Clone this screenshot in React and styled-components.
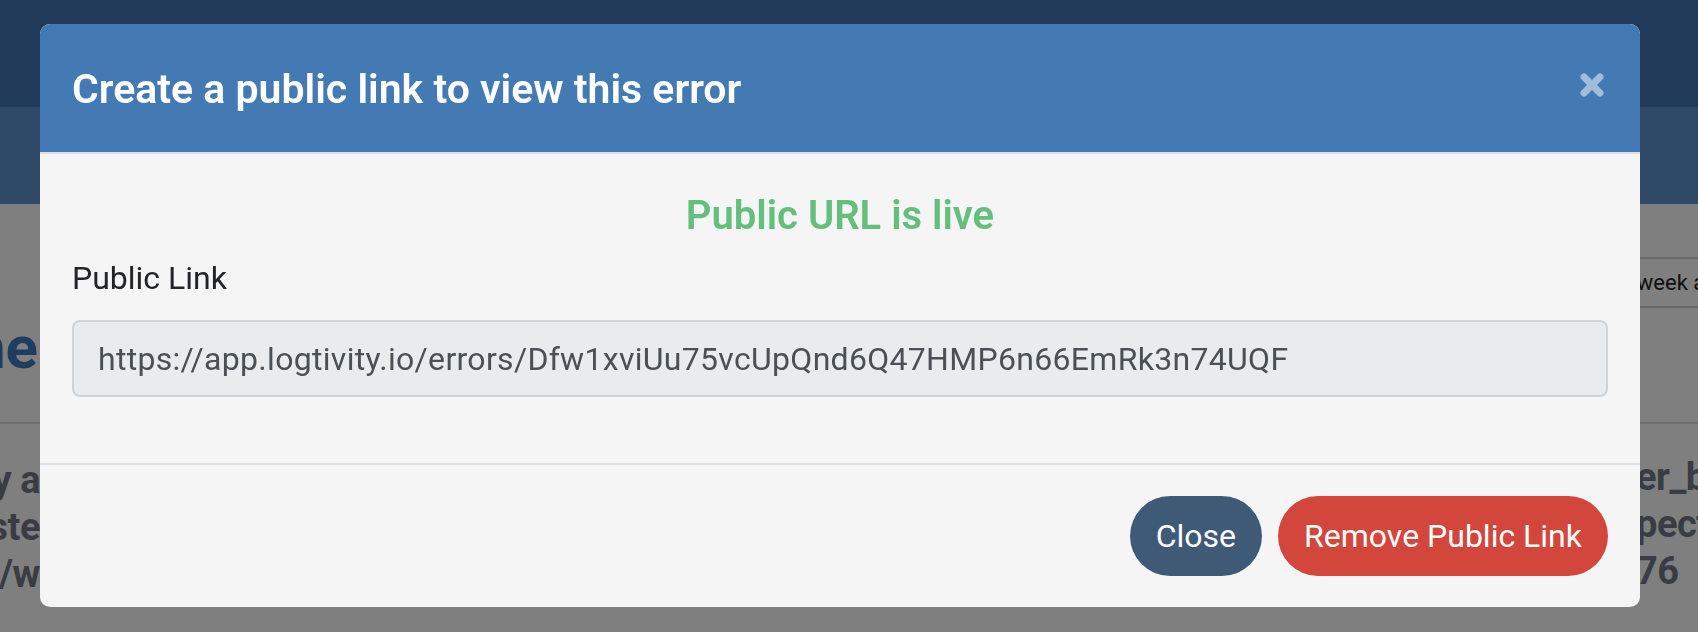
import React from 'react'
import styled, { createGlobalStyle } from 'styled-components'

const GlobalStyle = createGlobalStyle`
  html, body {
    margin: 0;
    padding: 0;
    height: 100%;
    overflow: hidden;
  }
  body {
    font-family: Roboto, "Liberation Sans", sans-serif;
    background: #fff;
  }
  * {
    box-sizing: border-box;
  }
`;

/* ---- page behind the modal ---- */

const Page = styled.div`
  height: 100vh;
  background: #fff;
  overflow: hidden;
`;

const Navbar = styled.div`
  height: 107px;
  background: #4476b4;
`;

const SubBar = styled.div`
  height: 97px;
  background: #5e94ce;
`;

const TitleRow = styled.div`
  display: grid;
  grid-template-columns: 38px 1fr 95px;
  height: 220px;
  border-bottom: 2px solid #dcdcdc;
`;

const Clip = styled.div`
  display: flex;
  justify-content: ${({ $end }) => ($end ? 'flex-end' : 'flex-start')};
  align-items: flex-start;
  overflow: hidden;
  white-space: nowrap;
  padding-top: ${({ $top }) => $top}px;
`;

const PageTitle = styled.h1`
  margin: 0;
  font-size: 60px;
  line-height: 64px;
  font-weight: 700;
  color: #3c7abe;
`;

const TimeBadge = styled.span`
  display: inline-flex;
  align-items: center;
  height: 51px;
  padding: 0 14px;
  border: 2px solid #d0d0d0;
  border-radius: 6px;
  font-size: 22px;
  color: #222;
`;

const TextRow = styled.div`
  display: grid;
  grid-template-columns: 40px 1fr 62px;
`;

const Lines = styled.div`
  display: flex;
  flex-direction: column;
  align-items: ${({ $end }) => ($end ? 'flex-end' : 'flex-start')};
  overflow: hidden;
  white-space: nowrap;
  padding-top: ${({ $top }) => $top}px;
`;

const Line = styled.span`
  font-size: 38px;
  line-height: 47px;
  font-weight: 700;
  letter-spacing: -0.5px;
  color: #737b86;
`;

/* ---- modal ---- */

const Backdrop = styled.div`
  position: fixed;
  inset: 0;
  background: rgba(0, 0, 0, 0.5);
  overflow: hidden;
`;

const Modal = styled.div`
  width: 1600px;
  margin: 24px 0 0 40px;
  background: #f5f5f5;
  border-radius: 10px;
  overflow: hidden;
`;

const Header = styled.div`
  display: flex;
  align-items: center;
  justify-content: space-between;
  padding: 35px 35px 33px 32px;
  background: #437ab4;
  border-bottom: 2px solid #dee2e6;
`;

const Title = styled.h5`
  margin: 0;
  font-size: 41px;
  line-height: 60px;
  font-weight: 600;
  color: #fff;
`;

const CloseX = styled.button`
  display: flex;
  width: 26px;
  height: 26px;
  margin-top: -8px;
  padding: 0;
  border: 0;
  background: none;
  color: rgba(255, 255, 255, 0.5);
  cursor: pointer;
`;

const Body = styled.div`
  padding: 32px 32px 32px;
`;

const Status = styled.h5`
  margin: 0 0 8px;
  text-align: center;
  font-size: 40px;
  line-height: 60px;
  font-weight: 600;
  color: #64bf7c;
`;

const FormGroup = styled.div`
  margin-bottom: 34px;
`;

const Label = styled.label`
  display: block;
  margin-bottom: 18px;
  font-size: 32px;
  line-height: 48px;
  color: #212529;
`;

const Input = styled.input`
  display: block;
  width: 100%;
  height: 77px;
  padding: 0 24px;
  background: #e9ecef;
  border: 2px solid #ced4da;
  border-radius: 8px;
  font-family: inherit;
  font-size: 32px;
  letter-spacing: 0.3px;
  color: #495057;
  outline: none;
`;

const Footer = styled.div`
  display: flex;
  justify-content: flex-end;
  gap: 16px;
  padding: 31px 32px;
  border-top: 2px solid #dee2e6;
`;

const Button = styled.button`
  height: 80px;
  padding: 0 26px;
  border: 0;
  border-radius: 40px;
  background: ${({ $tone }) => ($tone === 'danger' ? '#d3463c' : '#3e5a77')};
  font-family: inherit;
  font-size: 32px;
  color: #fff;
  cursor: pointer;
`;

const publicUrl = 'https://app.logtivity.io/errors/Dfw1xviUu75vcUpQnd6Q47HMP6n66EmRk3n74UQF'

const App = () => {
  return (
    <>
      <GlobalStyle />
      <Page>
        <Navbar />
        <SubBar />
        <TitleRow>
          <Clip $end $top={112}>
            <PageTitle>Error Timeline</PageTitle>
          </Clip>
          <div />
          <Clip $top={53}>
            <TimeBadge>1 week ago</TimeBadge>
          </Clip>
        </TitleRow>
        <TextRow>
          <Lines $end $top={33}>
            <Line>Uncaught TypeError in your theme by a</Line>
            <Line>Undefined index in the filesystem ste</Line>
            <Line>/var/w</Line>
          </Lines>
          <div />
          <Lines $top={30}>
            <Line>er_backtrace</Line>
            <Line>pected</Line>
            <Line>76</Line>
          </Lines>
        </TextRow>
      </Page>
      <Backdrop>
        <Modal>
          <Header>
            <Title>Create a public link to view this error</Title>
            <CloseX aria-label="Close">
              <svg width="26" height="26" viewBox="0 0 26 26">
                <path d="M5 5 L21 21 M21 5 L5 21" stroke="currentColor" strokeWidth="7" strokeLinecap="round" />
              </svg>
            </CloseX>
          </Header>
          <Body>
            <Status>Public URL is live</Status>
            <FormGroup>
              <Label>Public Link</Label>
              <Input readOnly value={publicUrl} />
            </FormGroup>
          </Body>
          <Footer>
            <Button>Close</Button>
            <Button $tone="danger">Remove Public Link</Button>
          </Footer>
        </Modal>
      </Backdrop>
    </>
  )
}

export default App
